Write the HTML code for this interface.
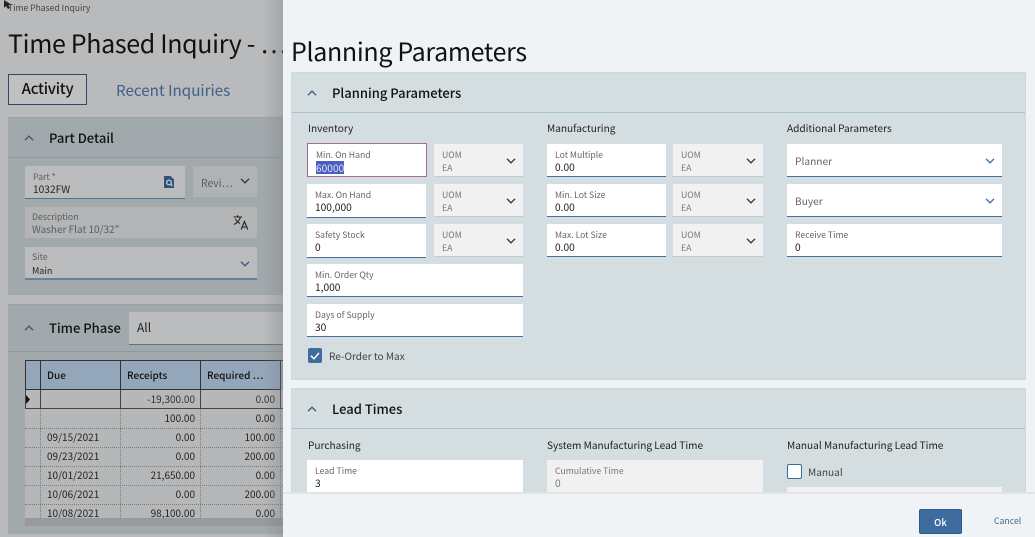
<!DOCTYPE html>
<html lang="en"><head><meta charset="utf-8"><title>Time Phased Inquiry</title>
<style>
*{box-sizing:border-box}
html,body{margin:0;padding:0}
body{width:1035px;height:537px;overflow:hidden;position:relative;background:#b9babb;font-family:"Noto Sans CJK JP","Liberation Sans",sans-serif;color:#111}
.a,.f,.u,.t{position:absolute}
.t{white-space:nowrap;line-height:1}
.f{background:#fff;border-bottom:1.5px solid #44709f;height:34px}
.f .l{position:absolute;left:8px;top:5px;font-size:8.7px;line-height:12px;color:#666;white-space:nowrap}
.f .v{position:absolute;left:8px;top:16px;font-size:10.2px;line-height:13px;color:#222;white-space:nowrap}
.f .p{position:absolute;left:8px;top:10px;font-size:10.2px;line-height:14px;color:#666}
.u{background:#f1f1f1;border-bottom:1px solid #c4cacc;height:33px}
.u .l{position:absolute;left:8px;top:5px;font-size:8.7px;line-height:12px;color:#777}
.u .v{position:absolute;left:8px;top:18px;font-size:8.7px;line-height:12px;color:#777}
svg.c{position:absolute;width:10px;height:6px;fill:none;stroke-width:1.3}
.lf{background:#bbbcbd;border-bottom:1.5px solid #5a7187}
.lf .l{color:#5c5c5c}.lf .v{color:#222}
.g{background:#a2a9ad}
.sec{position:absolute;background:#d4dde0;border:1px solid #d0d8da}
.ln{position:absolute;height:1px;background:#a9c3d0}
.h3{font-weight:500;font-size:13px}
.sub{font-size:10.1px;color:#222}
.cell{position:absolute;font-size:10px;line-height:13px;color:#222;white-space:nowrap}
.r{text-align:right;width:76px}
.hd{position:absolute;background:#94a7ba;top:361px;height:29px;border-right:1px solid #333;border-bottom:1px solid #333;font-weight:500;font-size:10px;line-height:27px;padding-left:6px;color:#111}
.dv{position:absolute;width:0;border-left:1px dotted #7d7d7d}
.dh{position:absolute;height:0;border-top:1px dotted #7d7d7d;left:25px;width:258px}
.ttl{font-size:25px;letter-spacing:-.33px;color:#111}
</style></head><body>

<!-- left background page -->
<div class="t" style="left:8px;top:4px;font-size:8.6px;color:#444">Time Phased Inquiry</div>
<svg class="a" style="left:3px;top:0" width="11" height="11" viewBox="0 0 11 11"><path d="M1 0 L1 8 L3 6 L5 9 L7 8 L5.5 5 L9 5 Z" fill="#222"/></svg>
<div class="t ttl" style="left:8px;top:31px">Time Phased Inquiry - …</div>
<div class="a" style="left:8px;top:74px;width:79px;height:31px;border:1px solid #2c4a68;background:#bfc0c1;text-align:center;font-size:15px;line-height:28px;font-weight:500;letter-spacing:-.25px">Activity</div>
<div class="t" style="left:116px;top:83px;font-size:15.2px;color:#3e6189">Recent Inquiries</div>

<div class="a g" style="left:8px;top:117px;width:275px;height:178px;border-top:1px solid #98a1a5"></div>
<div class="a" style="left:8px;top:157px;width:275px;height:1px;background:#8d9a9f"></div>
<svg class="c" style="left:24px;top:135px;stroke:#33557a" viewBox="0 0 10 6"><path d="M1 5.2 L5 1.2 L9 5.2"/></svg>
<div class="t h3" style="left:49px;top:131px">Part Detail</div>

<div class="f lf" style="left:25px;top:166px;width:160px;height:33px"><span class="l" style="top:5px">Part *</span><span class="v" style="top:16px">1032FW</span>
<svg class="a" style="left:139px;top:10px" width="10" height="12" viewBox="0 0 10 12"><path d="M0 0 H6.5 L10 3.5 V12 H0 Z" fill="#2f5379"/><circle cx="5" cy="6.5" r="2.3" fill="none" stroke="#cfd4d8" stroke-width="1.2"/><path d="M6.8 8.3 L8.4 9.9" stroke="#cfd4d8" stroke-width="1.2"/></svg></div>
<div class="u" style="left:193px;top:166px;width:64px;height:32px;background:#b0b3b5;border-bottom-color:#a3a8aa"><span class="a" style="left:8px;top:10px;font-size:10.4px;line-height:14px;color:#5d5d5d;white-space:nowrap">Revi…</span>
<svg class="c" style="left:47px;top:12px;stroke:#333" viewBox="0 0 10 6"><path d="M1 .8 L5 4.8 L9 .8"/></svg></div>
<div class="u" style="left:25px;top:207px;width:232px;height:32px;background:#b2b4b6;border-bottom-color:#a3a8aa"><span class="l" style="color:#5c5c5c;left:7px;top:4px">Description</span><span class="v" style="font-size:10px;top:16px;left:7px;color:#5c5c5c;white-space:nowrap">Washer Flat 10/32"</span>
<svg class="a" style="left:208px;top:8px" width="16" height="15" viewBox="0 0 16 15" fill="none" stroke="#222" stroke-width="1.1"><path d="M0.5 2 H9 M4.5 .2 V2 M7.5 2 C6.5 5.5 4 8 1 9.5 M2.5 4 C3.5 6 5 7.5 7 8.5"/><path d="M8.2 14.5 L11.4 6.5 L14.8 14.5 M9.4 12 H13.6"/></svg></div>
<div class="f lf" style="left:25px;top:247px;width:232px;height:33px;border-bottom:2px solid #6a8098"><span class="l" style="left:7px;top:4px">Site</span><span class="v" style="font-size:9px;top:17px;left:7px">Main</span>
<svg class="c" style="left:215px;top:14px;stroke:#33557a" viewBox="0 0 10 6"><path d="M1 .8 L5 4.8 L9 .8"/></svg></div>

<div class="a g" style="left:8px;top:304px;width:275px;height:230px;border-top:1px solid #98a1a5"></div>
<div class="a" style="left:8px;top:351px;width:275px;height:1px;background:#8d9a9f"></div>
<svg class="c" style="left:24px;top:325px;stroke:#33557a" viewBox="0 0 10 6"><path d="M1 5.2 L5 1.2 L9 5.2"/></svg>
<div class="t h3" style="left:49px;top:321px">Time Phase</div>
<div class="f lf" style="left:129px;top:312px;width:154px;height:33px"><span class="a" style="left:8px;top:8px;font-size:12px;line-height:15px;color:#222">All</span></div>

<!-- grid -->
<div class="a" style="left:25px;top:360px;width:258px;height:161px;background:#b6b7b8"></div>
<div class="a" style="left:25px;top:360px;width:258px;height:1px;background:#333"></div>
<div class="hd" style="left:25px;width:16px;padding:0;border-left:1px solid #333"></div>
<div class="hd" style="left:41px;width:80px">Due</div>
<div class="hd" style="left:121px;width:80px">Receipts</div>
<div class="hd" style="left:201px;width:80px">Required …</div>
<div class="a" style="left:281px;top:361px;width:2px;height:29px;background:#94a7ba"></div>
<div class="a" style="left:25px;top:408px;width:258px;height:1px;background:#444"></div>
<div class="a" style="left:25px;top:390px;width:1px;height:19px;background:#444"></div>
<div class="a" style="left:40px;top:390px;width:1px;height:19px;background:#444"></div>
<div class="a" style="left:120px;top:390px;width:1px;height:19px;background:#444"></div>
<div class="a" style="left:200px;top:390px;width:1px;height:19px;background:#444"></div>
<div class="a" style="left:280px;top:390px;width:1px;height:19px;background:#444"></div>
<svg class="a" style="left:26px;top:395px" width="4" height="9" viewBox="0 0 4 9"><path d="M0 0 L4 4.5 L0 9 Z" fill="#111"/></svg>
<div class="dv" style="left:40px;top:409px;height:109px"></div>
<div class="dv" style="left:120px;top:409px;height:109px"></div>
<div class="dv" style="left:200px;top:409px;height:109px"></div>
<div class="dv" style="left:280px;top:409px;height:109px"></div>
<div class="dh" style="top:428px"></div><div class="dh" style="top:447px"></div><div class="dh" style="top:466px"></div><div class="dh" style="top:485px"></div><div class="dh" style="top:504px"></div>

<div class="cell r" style="left:119px;top:392px;color:#333">-19,300.00</div><div class="cell r" style="left:199px;top:392px;color:#333">0.00</div>
<div class="cell r" style="left:119px;top:411px">100.00</div><div class="cell r" style="left:199px;top:411px">0.00</div>
<div class="cell" style="left:47px;top:430px">09/15/2021</div><div class="cell r" style="left:119px;top:430px">0.00</div><div class="cell r" style="left:199px;top:430px">100.00</div>
<div class="cell" style="left:47px;top:449px">09/23/2021</div><div class="cell r" style="left:119px;top:449px">0.00</div><div class="cell r" style="left:199px;top:449px">200.00</div>
<div class="cell" style="left:47px;top:468px">10/01/2021</div><div class="cell r" style="left:119px;top:468px">21,650.00</div><div class="cell r" style="left:199px;top:468px">0.00</div>
<div class="cell" style="left:47px;top:487px">10/06/2021</div><div class="cell r" style="left:119px;top:487px">0.00</div><div class="cell r" style="left:199px;top:487px">200.00</div>
<div class="cell" style="left:47px;top:506px;height:12px;overflow:hidden">10/08/2021</div><div class="cell r" style="left:119px;top:506px;height:12px;overflow:hidden">98,100.00</div><div class="cell r" style="left:199px;top:506px;height:12px;overflow:hidden">0.00</div>
<div class="a" style="left:25px;top:518px;width:258px;height:8px;background:#989a9b"></div>

<div class="a" style="left:263px;top:0;width:20px;height:537px;background:linear-gradient(to right,rgba(120,125,128,0),rgba(120,125,128,.35))"></div>

<!-- right panel -->
<div class="a" style="left:283px;top:0;width:752px;height:537px;background:#eff3f6"></div>
<div class="t ttl" style="left:291px;top:39px">Planning Parameters</div>

<div class="sec" style="left:291px;top:72px;width:735px;height:308px"></div>
<div class="ln" style="left:292px;top:112px;width:733px"></div>
<svg class="c" style="left:307px;top:90px;stroke:#33557a" viewBox="0 0 10 6"><path d="M1 5.2 L5 1.2 L9 5.2"/></svg>
<div class="t h3" style="left:332px;top:86px">Planning Parameters</div>

<div class="t sub" style="left:308px;top:123px">Inventory</div>
<div class="t sub" style="left:547px;top:123px">Manufacturing</div>
<div class="t sub" style="left:787px;top:123px">Additional Parameters</div>

<div class="f" style="left:307px;top:143px;width:120px;border:1px solid #a56f92;height:34px"><span class="l" style="left:8px;top:5px">Min. On Hand</span><span class="v" style="left:8px;top:17px;background:#4a5fc4;color:#dfe3f5;line-height:13px">60000</span></div>
<div class="u" style="left:434px;top:144px;width:89px"><span class="l">UOM</span><span class="v">EA</span><svg class="c" style="left:72px;top:14px;stroke:#333" viewBox="0 0 10 6"><path d="M1 .8 L5 4.8 L9 .8"/></svg></div>

<div class="f" style="left:307px;top:184px;width:119px"><span class="l">Max. On Hand</span><span class="v">100,000</span></div>
<div class="u" style="left:434px;top:184px;width:89px"><span class="l">UOM</span><span class="v">EA</span><svg class="c" style="left:72px;top:14px;stroke:#333" viewBox="0 0 10 6"><path d="M1 .8 L5 4.8 L9 .8"/></svg></div>

<div class="f" style="left:307px;top:224px;width:119px"><span class="l">Safety Stock</span><span class="v">0</span></div>
<div class="u" style="left:434px;top:224px;width:89px"><span class="l">UOM</span><span class="v">EA</span><svg class="c" style="left:72px;top:14px;stroke:#333" viewBox="0 0 10 6"><path d="M1 .8 L5 4.8 L9 .8"/></svg></div>

<div class="f" style="left:307px;top:264px;width:216px;height:33px"><span class="l">Min. Order Qty</span><span class="v">1,000</span></div>
<div class="f" style="left:307px;top:304px;width:216px;height:33px"><span class="l">Days of Supply</span><span class="v">30</span></div>

<div class="a" style="left:308px;top:348px;width:14px;height:15px;background:#3f6c9e;border-radius:2px"></div>
<svg class="a" style="left:308px;top:348px" width="14" height="15" viewBox="0 0 14 15" fill="none" stroke="#fff" stroke-width="1.5"><path d="M3 7.8 L6 10.8 L11 4.8"/></svg>
<div class="t" style="left:329px;top:351px;font-size:10.1px;color:#444">Re-Order to Max</div>

<div class="f" style="left:547px;top:144px;width:119px;height:33px"><span class="l">Lot Multiple</span><span class="v">0.00</span></div>
<div class="u" style="left:673px;top:144px;width:90px"><span class="l">UOM</span><span class="v">EA</span><svg class="c" style="left:73px;top:14px;stroke:#333" viewBox="0 0 10 6"><path d="M1 .8 L5 4.8 L9 .8"/></svg></div>
<div class="f" style="left:547px;top:184px;width:119px;height:33px"><span class="l">Min. Lot Size</span><span class="v">0.00</span></div>
<div class="u" style="left:673px;top:184px;width:90px"><span class="l">UOM</span><span class="v">EA</span><svg class="c" style="left:73px;top:14px;stroke:#333" viewBox="0 0 10 6"><path d="M1 .8 L5 4.8 L9 .8"/></svg></div>
<div class="f" style="left:547px;top:224px;width:119px;height:33px"><span class="l">Max. Lot Size</span><span class="v">0.00</span></div>
<div class="u" style="left:673px;top:224px;width:90px"><span class="l">UOM</span><span class="v">EA</span><svg class="c" style="left:73px;top:14px;stroke:#333" viewBox="0 0 10 6"><path d="M1 .8 L5 4.8 L9 .8"/></svg></div>

<div class="f" style="left:787px;top:144px;width:215px;height:33px"><span class="p">Planner</span><svg class="c" style="left:198px;top:14px;stroke:#3f6c9e" viewBox="0 0 10 6"><path d="M1 .8 L5 4.8 L9 .8"/></svg></div>
<div class="f" style="left:787px;top:184px;width:215px;height:33px"><span class="p">Buyer</span><svg class="c" style="left:198px;top:14px;stroke:#3f6c9e" viewBox="0 0 10 6"><path d="M1 .8 L5 4.8 L9 .8"/></svg></div>
<div class="f" style="left:787px;top:224px;width:215px;height:33px"><span class="l">Receive Time</span><span class="v">0</span></div>

<div class="sec" style="left:291px;top:388px;width:735px;height:149px"></div>
<div class="ln" style="left:292px;top:428px;width:733px"></div>
<svg class="c" style="left:307px;top:406px;stroke:#33557a" viewBox="0 0 10 6"><path d="M1 5.2 L5 1.2 L9 5.2"/></svg>
<div class="t h3" style="left:332px;top:402px">Lead Times</div>
<div class="t sub" style="left:308px;top:440px">Purchasing</div>
<div class="t sub" style="left:547px;top:440px">System Manufacturing Lead Time</div>
<div class="t sub" style="left:787px;top:440px">Manual Manufacturing Lead Time</div>
<div class="f" style="left:307px;top:460px;width:216px;height:33px"><span class="l">Lead Time</span><span class="v">3</span></div>
<div class="u" style="left:547px;top:460px;width:216px;height:33px"><span class="l">Cumulative Time</span><span class="v" style="font-size:10.2px;top:17px">0</span></div>
<div class="a" style="left:787px;top:464px;width:15px;height:15px;background:#fff;border:1.5px solid #3f6c9e;border-radius:2px"></div>
<div class="t" style="left:808px;top:467px;font-size:10.1px;color:#444">Manual</div>
<div class="a" style="left:787px;top:487px;width:215px;height:6px;background:#f1f1f1"></div>

<!-- footer -->
<div class="a" style="left:283px;top:492px;width:752px;height:45px;background:#eff3f6;border-top:2px solid #e1e5e8"></div>
<div class="a" style="left:919px;top:509px;width:43px;height:25px;background:#3f6c9e;border:1px solid #2f5a88;border-radius:2px;color:#fff;font-size:9.5px;font-weight:500;line-height:24px;text-align:center">Ok</div>
<div class="t" style="left:994px;top:517px;font-size:8.7px;color:#426590">Cancel</div>
</body></html>
